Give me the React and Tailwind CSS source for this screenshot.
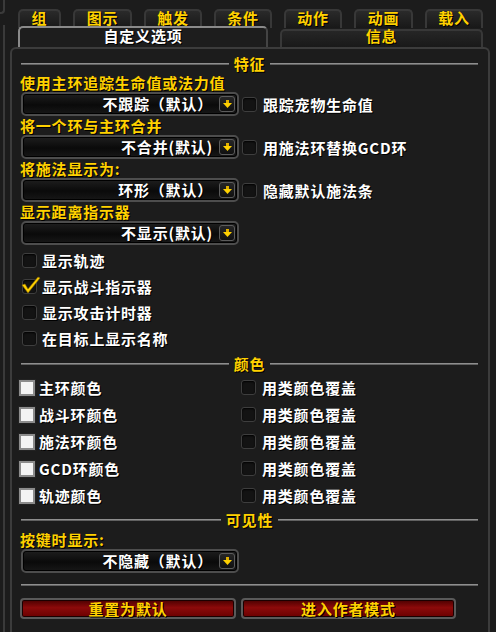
import React from "react";

const font = "font-['Noto_Sans_CJK_SC','Noto_Sans',sans-serif] font-bold";
const shadow = "[text-shadow:1px_1px_0_#000]";
const gold = "text-[#ffd100]";
const txt = "text-[15px] tracking-[0.8px] leading-none";

const topTabs = [
  { name: "组", w: "w-[43px]" },
  { name: "图示", w: "w-[59px]" },
  { name: "触发", w: "w-[58px]" },
  { name: "条件", w: "w-[58px]" },
  { name: "动作", w: "w-[58px]" },
  { name: "动画", w: "w-[59px]" },
  { name: "载入", w: "w-[58px]" },
];

const dropRows = [
  { label: "使用主环追踪生命值或法力值", value: "不跟踪（默认）", check: "跟踪宠物生命值" },
  { label: "将一个环与主环合并", value: "不合并(默认)", check: "用施法环替换GCD环" },
  { label: "将施法显示为:", value: "环形（默认）", check: "隐藏默认施法条" },
  { label: "显示距离指示器", value: "不显示(默认)" },
];

const toggles = [
  { text: "显示轨迹" },
  { text: "显示战斗指示器", on: true },
  { text: "显示攻击计时器" },
  { text: "在目标上显示名称" },
];

const colors = ["主环颜色", "战斗环颜色", "施法环颜色", "GCD环颜色", "轨迹颜色"];

const Arrow = () => (
  <div className="w-[16px] h-[16px] rounded-[3px] border border-[#5c5c5c] bg-[linear-gradient(180deg,#262626,#101010)] flex items-center justify-center">
    <svg width="9" height="8" viewBox="0 0 9 8">
      <rect x="3" y="0" width="3" height="3" fill="#e0b000" />
      <polygon points="0,3 9,3 4.5,8" fill="#ffd100" />
    </svg>
  </div>
);

const Dropdown = ({ value }) => (
  <div className="ml-[1px] w-[218px] h-[24px] rounded-[5px] border-2 border-[#4d4d4d] bg-[linear-gradient(180deg,#1e1e1e,#0a0a0a_55%,#171717)] shadow-[inset_0_0_0_1px_#000] flex items-center justify-end pr-[2px]">
    <span className={`text-white ${txt} mr-[6px] pb-[1px] ${shadow}`}>{value}</span>
    <Arrow />
  </div>
);

const Box = ({ on }) => (
  <div className="relative w-[15px] h-[15px] rounded-[3px] border border-[#3e3e3e] bg-[#131313] shadow-[inset_0_1px_2px_#000] shrink-0">
    {on && (
      <svg className="absolute -left-[2px] -top-[4px]" width="20" height="18" viewBox="0 0 20 18">
        <path d="M1 9 L4 8 L7 13 L17 1 L19 2 L7 17 Z" fill="#ffd100" stroke="#8a6a00" strokeWidth="0.6" />
      </svg>
    )}
  </div>
);

const Header = ({ text, mt }) => (
  <div className={`h-[20px] flex items-center gap-[5px] ${mt}`}>
    <div className="flex-1 ml-[1px] h-[2px] bg-[linear-gradient(180deg,#a5a5a5,#4a4a4a)]" />
    <span className={`${txt} pb-[2px] ${gold} ${shadow}`}>{text}</span>
    <div className="flex-1 mr-[1px] h-[2px] bg-[linear-gradient(180deg,#a5a5a5,#4a4a4a)]" />
  </div>
);

const RedButton = ({ text, w }) => (
  <div className={`${w} h-[21px] rounded-[4px] border-2 border-[#5a5a5a] bg-[linear-gradient(180deg,#4a0000,#8c0a0a_45%,#6a0000)] shadow-[inset_0_0_0_1px_#1a0000] flex items-center justify-center`}>
    <span className={`${txt} pb-[1px] ${gold} ${shadow}`}>{text}</span>
  </div>
);

export default function App() {
  return (
    <div className={`w-[496px] h-[632px] overflow-hidden bg-[#1c1c1c] flex ${font}`}>
      <div className="w-[5px] flex flex-col">
        <div className="h-[14px] border-r-2 border-b-2 border-[#3a3a3a] rounded-br-[4px]" />
        <div className="flex-1 mt-[11px] border-r-2 border-[#3a3a3a]" />
      </div>

      <div className="flex-1 flex flex-col">
        <div className="flex gap-[12px] pl-[13px] pt-[9px] h-[28px]">
          {topTabs.map((t) => (
            <div
              key={t.name}
              className={`${t.w} h-[19px] rounded-t-[5px] border-2 border-b-0 border-[#383838] bg-[linear-gradient(180deg,#2a2a2a,#181818)] flex items-start justify-center`}
            >
              <span className={`${txt} -mt-[1px] ${gold} ${shadow}`}>{t.name}</span>
            </div>
          ))}
        </div>

        <div className="flex gap-[12px] pl-[13px] h-[20px] -mt-[1px] items-end">
          <div className="w-[250px] h-[21px] rounded-t-[5px] border-2 border-b-0 border-[#8a8a8a] border-r-[#444] bg-[#1d1d1d] flex items-start justify-center">
            <span className={`text-white ${txt} ${shadow}`}>自定义选项</span>
          </div>
          <div className="w-[203px] h-[18px] rounded-t-[5px] border-2 border-b-0 border-[#383838] bg-[linear-gradient(180deg,#262626,#191919)] flex items-start justify-center">
            <span className={`${txt} -mt-[3px] ${gold} ${shadow}`}>信息</span>
          </div>
        </div>

        <div className="ml-[5px] w-[480px] flex-1 rounded-t-[6px] border-2 border-b-0 border-[#3c3c3c] bg-[radial-gradient(circle_at_150px_300px,#2a1a16,transparent_70px),radial-gradient(circle_at_10px_400px,#2a1814,transparent_60px),#202020] pl-[8px] pr-[9px] pt-[5px] flex flex-col">
          <Header text="特征" />

          <div className="flex flex-col gap-[1px]">
            {dropRows.map((r) => (
              <div key={r.label} className="h-[42px] flex flex-col">
                <div className={`h-[18px] flex items-center pb-[1px] ${txt} ${gold} ${shadow}`}>
                  {r.label}
                </div>
                <div className="h-[24px] flex items-center">
                  <Dropdown value={r.value} />
                  {r.check && (
                    <>
                      <div className="ml-[3px]">
                        <Box />
                      </div>
                      <span className={`ml-[6px] text-white ${txt} ${shadow}`}>{r.check}</span>
                    </>
                  )}
                </div>
              </div>
            ))}
          </div>

          <div className="mt-[2px] flex flex-col">
            {toggles.map((t) => (
              <div key={t.text} className="h-[26px] flex items-center pl-[2px]">
                <Box on={t.on} />
                <span className={`ml-[5px] text-white ${txt} ${shadow}`}>{t.text}</span>
              </div>
            ))}
          </div>

          <Header text="颜色" mt="mt-[3px]" />

          <div className="flex flex-col">
            {colors.map((c) => (
              <div key={c} className="h-[27px] flex items-center">
                <div className="w-[222px] flex items-center -ml-[1px]">
                  <div className="w-[16px] h-[16px] border-2 border-[#8c8c8c] bg-[#f4f4f4] shadow-[0_0_0_1px_#222]" />
                  <span className={`ml-[4px] text-white ${txt} ${shadow}`}>{c}</span>
                </div>
                <Box />
                <span className={`ml-[6px] text-white ${txt} ${shadow}`}>用类颜色覆盖</span>
              </div>
            ))}
          </div>

          <Header text="可见性" mt="mt-[1px]" />

          <div className={`h-[18px] mt-[1px] flex items-center pb-[1px] ${txt} ${gold} ${shadow}`}>
            按键时显示:
          </div>
          <div className="h-[24px] flex items-center">
            <Dropdown value="不隐藏（默认）" />
          </div>

          <div className="mt-[11px] mx-[1px] h-[2px] bg-[linear-gradient(180deg,#a5a5a5,#4a4a4a)]" />

          <div className="mt-[12px] flex gap-[5px]">
            <RedButton text="重置为默认" w="w-[216px]" />
            <RedButton text="进入作者模式" w="w-[215px]" />
          </div>
        </div>
      </div>
    </div>
  );
}
